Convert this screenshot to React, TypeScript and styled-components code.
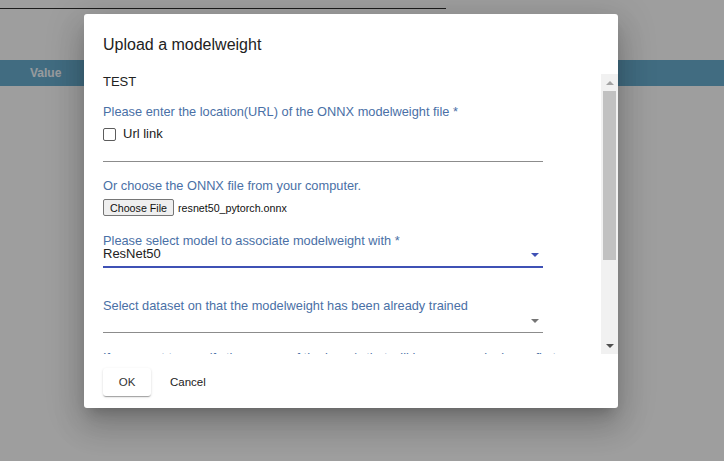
import React from "react";
import styled, { createGlobalStyle } from "styled-components";

const Global = createGlobalStyle`
  html, body { margin: 0; padding: 0; }
  body {
    width: 724px;
    height: 461px;
    overflow: hidden;
    background: #ffffff;
    font-family: "Liberation Sans", Arial, sans-serif;
  }
`;

const Page = styled.div`
  position: relative;
  width: 724px;
  height: 461px;
  overflow: hidden;
  background: #ffffff;
`;

const TopRule = styled.div`
  margin-top: 8px;
  width: 446px;
  border-top: 1px solid #2e2e2e;
`;

const TableHead = styled.div`
  margin-top: 51px;
  height: 26px;
  background: #6aaed0;
  display: flex;
  align-items: center;
  padding-left: 30px;
  color: #f4faff;
  font-size: 12px;
  font-weight: 700;
`;

const Backdrop = styled.div`
  position: absolute;
  inset: 0;
  background: rgba(0, 0, 0, 0.38);
  display: flex;
  align-items: flex-start;
  justify-content: flex-start;
  padding: 14px 0 0 84px;
  box-sizing: border-box;
`;

const Dialog = styled.div`
  width: 534px;
  height: 394px;
  background: #ffffff;
  border-radius: 3px;
  display: flex;
  flex-direction: column;
  box-shadow: 0px 9px 12px -6px rgba(0, 0, 0, 0.2),
    0px 19px 30px 2px rgba(0, 0, 0, 0.14),
    0px 7px 37px 6px rgba(0, 0, 0, 0.12);
  overflow: hidden;
`;

const Title = styled.h2`
  margin: 0;
  padding: 21px 19px 19px;
  font-size: 16px;
  line-height: 20px;
  font-weight: 400;
  color: #222222;
`;

const ScrollRegion = styled.div`
  display: flex;
  height: 280px;
  flex-shrink: 0;
`;

const Content = styled.div`
  flex: 1;
  overflow: hidden;
  padding: 0 19px;
`;

const Plain = styled.div`
  font-size: 13px;
  line-height: 15px;
  color: #222222;
`;

const Label = styled.div<{ $mt?: number }>`
  margin-top: ${(p) => p.$mt ?? 0}px;
  font-size: 12.8px;
  line-height: 15px;
  color: #4a70a6;
  white-space: nowrap;
`;

const CheckRow = styled.label`
  margin-top: 6px;
  height: 16px;
  display: flex;
  align-items: center;
  gap: 7px;
  font-size: 13px;
  color: #222222;
`;

const Box = styled.span`
  width: 11px;
  height: 11px;
  border: 1px solid #5c5c5c;
  border-radius: 2px;
  background: #ffffff;
  transform: translateY(1px);
`;

const TextField = styled.div`
  width: 440px;
  height: 20px;
  border-bottom: 1px solid #8c8c8c;
`;

const FileRow = styled.div`
  margin-top: 6px;
  display: flex;
  align-items: center;
  gap: 4px;
  font-size: 10.7px;
  color: #111111;
`;

const FileButton = styled.button`
  height: 17px;
  padding: 0 6px;
  font-family: inherit;
  font-size: 10.7px;
  color: #111111;
  background: #efefef;
  border: 1px solid #767676;
  border-radius: 2px;
`;

const SelectField = styled.div<{ $mt: number; $focused?: boolean }>`
  margin-top: ${(p) => p.$mt}px;
  width: 440px;
  display: flex;
  flex-direction: column;
  padding-top: 1px;
  border-bottom: ${(p) => (p.$focused ? "2px solid #3f51b5" : "1px solid #8c8c8c")};
  padding-bottom: ${(p) => (p.$focused ? 6 : 7)}px;
`;

const SelectLabel = styled.div`
  font-size: 12.8px;
  line-height: 13px;
  color: #4a70a6;
  white-space: nowrap;
`;

const ValueRow = styled.div`
  height: 13px;
  display: flex;
  align-items: center;
  justify-content: space-between;
  padding-right: 4px;
  font-size: 13px;
  line-height: 13px;
  color: #222222;
`;

const Caret = styled.span<{ $color: string; $dy?: number }>`
  width: 0;
  height: 0;
  border-left: 4px solid transparent;
  border-right: 4px solid transparent;
  border-top: 4px solid ${(p) => p.$color};
  transform: translateY(${(p) => p.$dy ?? 1}px);
`;

const ScrollTrack = styled.div`
  width: 17px;
  background: #f1f1f1;
  display: flex;
  flex-direction: column;
  align-items: center;
`;

const ArrowBtn = styled.div<{ $up?: boolean; $color: string }>`
  height: 17px;
  width: 17px;
  display: flex;
  align-items: center;
  justify-content: center;
  &::before {
    content: "";
    width: 0;
    height: 0;
    border-left: 4px solid transparent;
    border-right: 4px solid transparent;
    ${(p) =>
      p.$up
        ? `border-bottom: 4px solid ${p.$color};`
        : `border-top: 4px solid ${p.$color};`}
  }
`;

const Thumb = styled.div`
  width: 13px;
  height: 169px;
  background: #c1c1c1;
`;

const Spacer = styled.div`
  flex: 1;
`;

const Actions = styled.div`
  display: flex;
  align-items: center;
  padding: 14px 19px 12px;
`;

const OkButton = styled.button`
  width: 48px;
  height: 28px;
  border: none;
  border-radius: 3px;
  background: #ffffff;
  font-family: inherit;
  font-size: 11.5px;
  color: #333333;
  box-shadow: 0px 2px 1px -1px rgba(0, 0, 0, 0.2),
    0px 1px 1px 0px rgba(0, 0, 0, 0.14), 0px 1px 3px 0px rgba(0, 0, 0, 0.12);
`;

const TextButton = styled.button`
  margin-left: 7px;
  height: 28px;
  padding: 0 12px;
  border: none;
  background: transparent;
  font-family: inherit;
  font-size: 11.5px;
  color: #222222;
`;

export default function App() {
  return (
    <>
      <Global />
      <Page>
        <TopRule />
        <TableHead>Value</TableHead>
        <Backdrop>
          <Dialog>
            <Title>Upload a modelweight</Title>
            <ScrollRegion>
              <Content>
                <Plain>TEST</Plain>
                <Label $mt={15}>
                  Please enter the location(URL) of the ONNX modelweight file *
                </Label>
                <CheckRow>
                  <Box />
                  Url link
                </CheckRow>
                <TextField />
                <Label $mt={16}>Or choose the ONNX file from your computer.</Label>
                <FileRow>
                  <FileButton>Choose File</FileButton>
                  resnet50_pytorch.onnx
                </FileRow>
                <SelectField $mt={17} $focused>
                  <SelectLabel>Please select model to associate modelweight with *</SelectLabel>
                  <ValueRow>
                    ResNet50
                    <Caret $color="#3f51b5" />
                  </ValueRow>
                </SelectField>
                <SelectField $mt={30}>
                  <SelectLabel>
                    Select dataset on that the modelweight has been already trained
                  </SelectLabel>
                  <ValueRow>
                    <span />
                    <Caret $color="#757575" $dy={2} />
                  </ValueRow>
                </SelectField>
                <Label $mt={17}>
                  If you want to specify the names of the layer/s that will be compared, please first
                </Label>
              </Content>
              <ScrollTrack>
                <ArrowBtn $up $color="#a3a3a3" />
                <Thumb />
                <Spacer />
                <ArrowBtn $color="#505050" />
              </ScrollTrack>
            </ScrollRegion>
            <Actions>
              <OkButton>OK</OkButton>
              <TextButton>Cancel</TextButton>
            </Actions>
          </Dialog>
        </Backdrop>
      </Page>
    </>
  );
}
